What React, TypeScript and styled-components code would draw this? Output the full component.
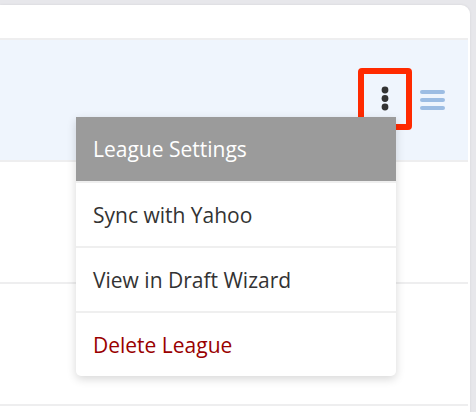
import React from "react";
import styled, { createGlobalStyle } from "styled-components";

const GlobalStyle = createGlobalStyle`
	html, body {
		margin: 0;
		padding: 0;
		background: #e7e7eb;
		font-family: "Open Sans", "Liberation Sans", sans-serif;
	}
`;

const Page = styled.div`
	width: 476px;
	height: 412px;
	overflow: hidden;
	padding: 5px 6px 0 0;
	box-sizing: border-box;
`;

const Card = styled.div`
	height: 420px;
	background: #fff;
	border-top-right-radius: 9px;
	box-shadow: 0 0 3px rgba(0, 0, 0, 0.08);
	padding-right: 2px;
`;

const CardTop = styled.div`
	height: 33px;
	border-bottom: 2px solid #eeeeef;
`;

const Row = styled.div<{ $active?: boolean; $height: number }>`
	position: relative;
	display: flex;
	align-items: center;
	justify-content: flex-end;
	height: ${(p) => p.$height}px;
	padding-right: 23px;
	background: ${(p) => (p.$active ? "#eff5fd" : "#fff")};
	border-bottom: 2px solid #eeeeef;
`;

const KebabButton = styled.button`
	display: flex;
	align-items: center;
	justify-content: center;
	width: 54px;
	height: 62px;
	padding: 0;
	margin-top: -2px;
	background: transparent;
	border: 6px solid #ff2a00;
	border-radius: 4px;
	box-sizing: border-box;
`;

const MenuToggle = styled.button`
	display: flex;
	flex-direction: column;
	gap: 4px;
	width: 25px;
	margin-left: 8px;
	padding: 0;
	background: transparent;
	border: none;
`;

const ToggleBar = styled.span`
	height: 4px;
	border-radius: 2px;
	background: #9dbde3;
`;

const Menu = styled.div`
	position: absolute;
	top: 77px;
	right: 72px;
	width: 320px;
	background: #fff;
	border-radius: 0 0 5px 5px;
	box-shadow: 0 3px 10px rgba(0, 0, 0, 0.16);
	z-index: 2;
	overflow: hidden;
`;

const MenuHeader = styled.div`
	height: 64px;
	display: flex;
	align-items: center;
	padding-left: 17px;
	background: #9b9b9b;
	color: #fff;
	font-size: 21px;
`;

const MenuItem = styled.div<{ $danger?: boolean }>`
	height: 63px;
	display: flex;
	align-items: center;
	padding-left: 17px;
	border-top: 2px solid #efefef;
	color: ${(p) => (p.$danger ? "#990000" : "#333")};
	font-size: 21px;
`;

const items = ["Sync with Yahoo", "View in Draft Wizard"];

export default function App() {
	return (
		<>
			<GlobalStyle />
			<Page>
				<Card>
					<CardTop />
					<Row $active $height={120}>
						<KebabButton>
							<svg width="8" height="26" viewBox="0 0 8 26">
								<circle cx="4" cy="4" r="3.4" fill="#333" />
								<circle cx="4" cy="12.5" r="3.4" fill="#333" />
								<circle cx="4" cy="21" r="3.4" fill="#333" />
							</svg>
						</KebabButton>
						<MenuToggle>
							<ToggleBar />
							<ToggleBar />
							<ToggleBar />
						</MenuToggle>
						<Menu>
							<MenuHeader>League Settings</MenuHeader>
							{items.map((label) => (
								<MenuItem key={label}>{label}</MenuItem>
							))}
							<MenuItem $danger>Delete League</MenuItem>
						</Menu>
					</Row>
					<Row $height={120} />
					<Row $height={120} />
				</Card>
			</Page>
		</>
	);
}
